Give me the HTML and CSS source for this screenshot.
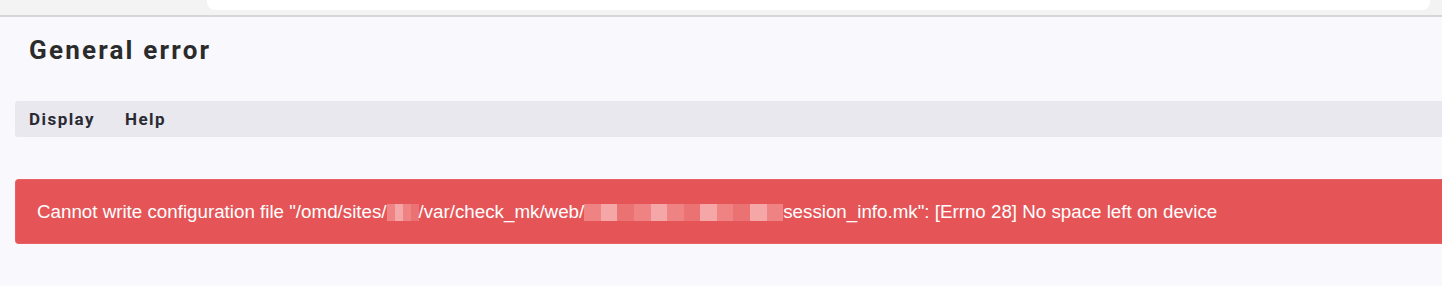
FILE: index.html
```html
<!DOCTYPE html>
<html>
<head>
<meta charset="utf-8">
<link rel="stylesheet" href="styles.css">
</head>
<body>
<div class="chrome">
  <div class="chrome-left"></div>
  <div class="chrome-field"></div>
</div>
<main class="page">
  <h1 class="title">General error</h1>
  <nav class="menubar">
    <span class="menu-item">Display</span>
    <span class="menu-item">Help</span>
  </nav>
  <div class="error">Cannot write configuration file "/omd/sites/<span class="blur blur-a"><i></i><i class="b"></i><i></i><i class="c"></i></span>/var/check_mk/web/<span class="blur blur-b"><i></i><i class="b"></i><i class="c"></i><i></i><i class="b"></i><i></i><i class="c"></i><i class="b"></i><i></i><i class="c"></i><i class="b"></i><i></i></span>session_info.mk": [Errno 28] No space left on device</div>
</main>
</body>
</html>
```
FILE: styles.css
```css
html, body {
  margin: 0;
  padding: 0;
}
body {
  width: 1442px;
  height: 286px;
  overflow: hidden;
  background: #f8f8fd;
  font-family: Roboto, "Liberation Sans", sans-serif;
}
.chrome {
  display: flex;
  height: 15px;
  background: #f3f3f3;
  border-bottom: 2px solid #d6d6d6;
  box-sizing: content-box;
}
.chrome-left {
  width: 207px;
}
.chrome-field {
  width: 1223px;
  height: 10px;
  background: #ffffff;
  border-radius: 0 0 8px 8px;
}
.page {
  padding: 0 0 0 15px;
}
.title {
  margin: 0;
  padding: 18px 0 0 14px;
  height: 84px;
  box-sizing: border-box;
  font-size: 26px;
  font-weight: 700;
  letter-spacing: 2.2px;
  color: #2b2b2b;
  line-height: 30px;
}
.menubar {
  display: flex;
  align-items: center;
  height: 36px;
  background: #e8e8ee;
  border-radius: 3px 0 0 3px;
  padding-left: 14px;
  gap: 30px;
}
.menu-item {
  font-size: 17px;
  font-weight: 700;
  letter-spacing: 1.45px;
  color: #2a2a33;
}
.error {
  margin-top: 42px;
  height: 65px;
  box-sizing: border-box;
  display: flex;
  align-items: center;
  padding-left: 21px;
  background: #e55557;
  border: 1px solid #e96164;
  border-right: none;
  border-radius: 4px 0 0 4px;
  color: #ffffff;
  font-family: "Liberation Sans", Arial, sans-serif;
  font-size: 18.75px;
  white-space: pre;
}
.blur {
  display: inline-flex;
  height: 17px;
  align-self: center;
  margin-top: 2px;
}
.blur i {
  flex: 1;
  background: rgba(255, 200, 200, 0.4);
}
.blur i.b {
  background: rgba(255, 220, 220, 0.6);
}
.blur i.c {
  background: rgba(240, 150, 150, 0.45);
}
.blur-a {
  width: 32px;
}
.blur-b {
  width: 199px;
}
```
